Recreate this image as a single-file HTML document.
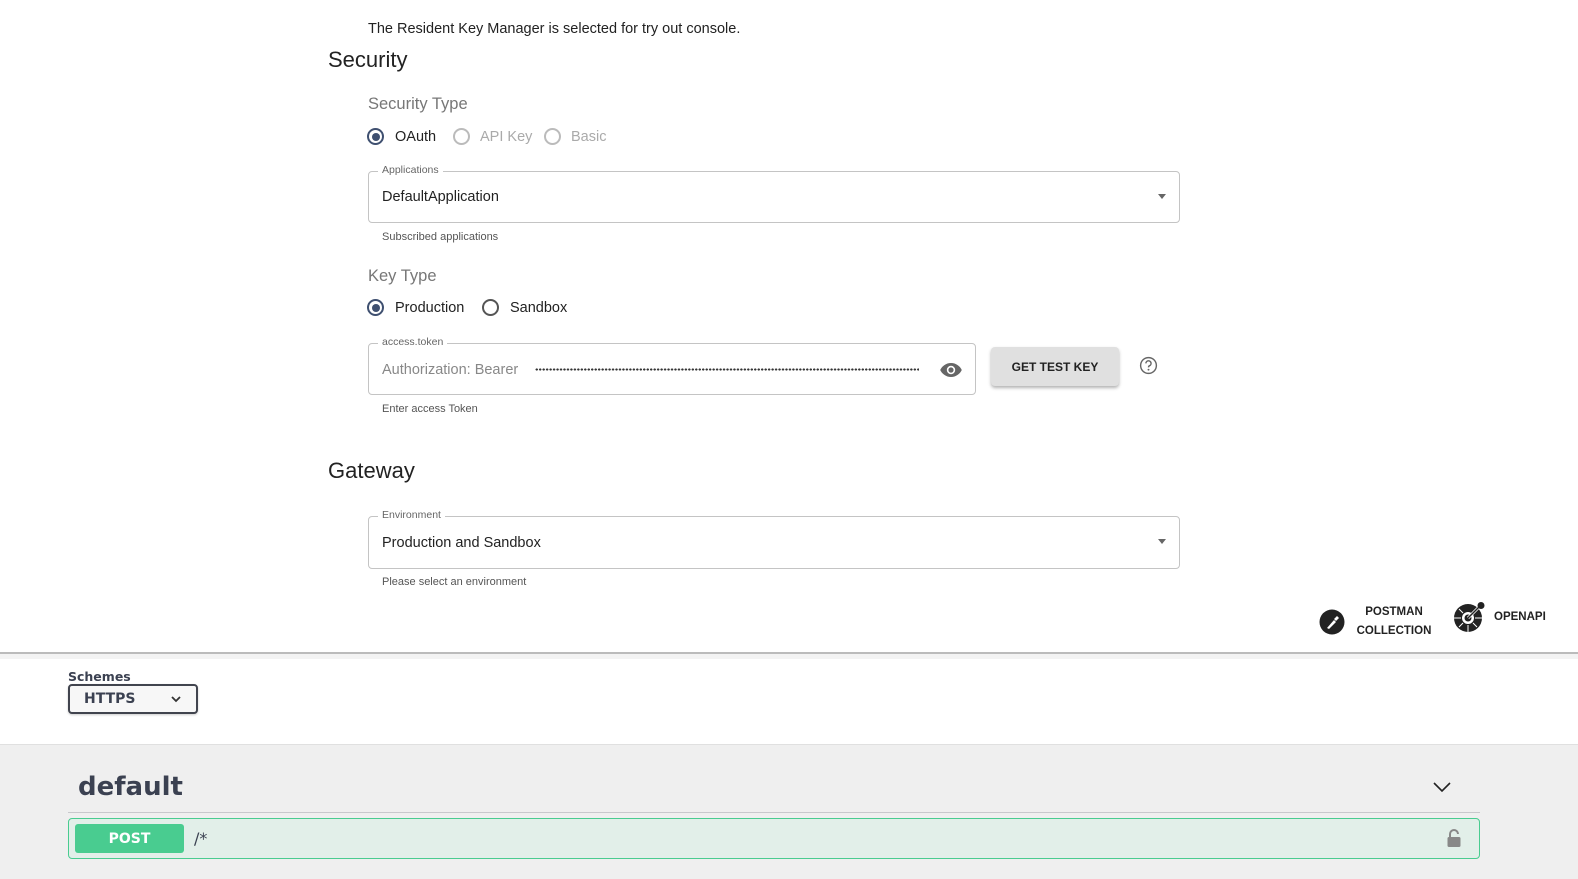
<!DOCTYPE html>
<html><head><meta charset="utf-8"><style>
*{box-sizing:border-box;margin:0;padding:0}
body{width:1578px;height:879px;overflow:hidden;background:#fff;font-family:"Liberation Sans",Arial,sans-serif;color:#222;position:relative}
.a{position:absolute;white-space:nowrap}
.radio{position:absolute;width:17px;height:17px;border-radius:50%;border:2px solid #bbb}
.radio.on{border-color:#3f5070}
.radio.on::after{content:"";position:absolute;left:2.5px;top:2.5px;width:8px;height:8px;border-radius:50%;background:#3f5070}
.field{position:absolute;border:1px solid #c4c4c4;border-radius:4px}
.leg{position:absolute;top:-8px;left:9px;background:#fff;padding:0 4px;font-size:10.5px;color:#666}
.help{font-size:11px;color:#555}
.caret{position:absolute;width:0;height:0;border-left:4.5px solid transparent;border-right:4.5px solid transparent;border-top:5px solid #666}
</style></head><body>
<div class="a" style="left:368px;top:21px;font-size:14.5px;color:#222">The Resident Key Manager is selected for try out console.</div>
<div class="a" style="left:328px;top:47px;font-size:22px;color:#222">Security</div>
<div class="a" style="left:368px;top:95px;font-size:16.5px;color:#777">Security Type</div>
<div class="radio on" style="left:367px;top:128px"></div>
<div class="a" style="left:395px;top:129px;font-size:14.5px">OAuth</div>
<div class="radio" style="left:453px;top:128px"></div>
<div class="a" style="left:480px;top:129px;font-size:14.5px;color:#aaa">API Key</div>
<div class="radio" style="left:544px;top:128px"></div>
<div class="a" style="left:571px;top:129px;font-size:14.5px;color:#aaa">Basic</div>

<div class="field" style="left:368px;top:171px;width:812px;height:52px"><span class="leg">Applications</span>
<div class="a" style="left:13px;top:17px;font-size:14.5px">DefaultApplication</div>
<div class="caret" style="left:789px;top:22px"></div></div>
<div class="a help" style="left:382px;top:231px">Subscribed applications</div>

<div class="a" style="left:368px;top:267px;font-size:16.5px;color:#777">Key Type</div>
<div class="radio on" style="left:367px;top:299px"></div>
<div class="a" style="left:395px;top:300px;font-size:14.5px">Production</div>
<div class="radio" style="left:482px;top:299px;border-color:#555"></div>
<div class="a" style="left:510px;top:300px;font-size:14.5px">Sandbox</div>

<div class="field" style="left:368px;top:343px;width:608px;height:52px"><span class="leg">access.token</span>
<div class="a" style="left:13px;top:18px;font-size:14.5px;color:#888">Authorization: Bearer</div>
<div class="a" style="left:166px;top:24px;width:384px;height:3px;background:radial-gradient(circle,#333 1px,transparent 1.3px) 0 0/3.47px 3px repeat-x"></div>
<svg class="a" style="left:570px;top:17px" width="24" height="18" viewBox="0 0 24 18"><path d="M12 2C7 2 3 5.2 1.2 9 3 12.8 7 16 12 16s9-3.2 10.8-7C21 5.2 17 2 12 2z" fill="#666"/><circle cx="12" cy="9" r="4.2" fill="#fff"/><circle cx="12" cy="9" r="2.6" fill="#666"/></svg>
</div>
<div class="a help" style="left:382px;top:403px">Enter access Token</div>
<div class="a" style="left:991px;top:347px;width:128px;height:39px;background:#e0e0e0;border-radius:4px;box-shadow:0 2px 3px rgba(0,0,0,.3);font-size:12px;font-weight:bold;text-align:center;line-height:40px;color:#222">GET TEST KEY</div>
<svg class="a" style="left:1139px;top:356px" width="19" height="19" viewBox="0 0 20 20"><circle cx="10" cy="10" r="8.3" fill="none" stroke="#666" stroke-width="1.5"/><path d="M7.3 7.8a2.7 2.7 0 1 1 3.8 2.4c-.8.4-1.1.9-1.1 1.8" fill="none" stroke="#666" stroke-width="1.5"/><circle cx="10" cy="14.4" r="1" fill="#666"/></svg>

<div class="a" style="left:328px;top:458px;font-size:22px;color:#222">Gateway</div>
<div class="field" style="left:368px;top:516px;width:812px;height:53px"><span class="leg">Environment</span>
<div class="a" style="left:13px;top:18px;font-size:14.5px">Production and Sandbox</div>
<div class="caret" style="left:789px;top:22px"></div></div>
<div class="a help" style="left:382px;top:576px">Please select an environment</div>

<svg class="a" style="left:1319px;top:609px" width="26" height="26" viewBox="0 0 26 26"><circle cx="13" cy="13" r="12.5" fill="#222"/><path d="M8 19l7-8 2 2-7 7z M15 10l3-3 2 2-3 3z" fill="#fff"/></svg>
<div class="a" style="left:1355px;top:603px;font-size:11.5px;font-weight:bold;text-align:center;line-height:19px;width:78px">POSTMAN<br>COLLECTION</div>
<svg class="a" style="left:1453px;top:601px" width="34" height="32" viewBox="0 0 34 32"><circle cx="15" cy="17" r="14" fill="#222"/><circle cx="15" cy="17" r="6" fill="#fff"/><circle cx="15" cy="17" r="3.5" fill="#222"/><path d="M15 17L27 5" stroke="#fff" stroke-width="3"/><path d="M15 17L27 5" stroke="#222" stroke-width="1.5"/><circle cx="28" cy="4.5" r="3.5" fill="#222"/><path d="M1 17h7M22 17h7M15 24v7M6 26l4-4M24 26l-4-4M6 8l4 4" stroke="#fff" stroke-width="1"/></svg>
<div class="a" style="left:1494px;top:611px;font-size:11.5px;font-weight:bold">OPENAPI</div>

<div class="a" style="left:0;top:652px;width:1578px;height:2px;background:#bbb"></div>
<div class="a" style="left:0;top:654px;width:1578px;height:5px;background:#f3f3f3"></div>
<div class="a" style="left:68px;top:669px;font-size:12.5px;font-weight:bold;color:#3b4151;font-family:'DejaVu Sans',sans-serif">Schemes</div>
<div class="a" style="left:68px;top:684px;width:130px;height:30px;border:2px solid #41444e;border-radius:4px;background:#f7f7f7;box-shadow:0 1px 2px rgba(0,0,0,.2)">
<span class="a" style="left:14px;top:5px;font-size:14px;font-weight:bold;color:#3b4151;font-family:'DejaVu Sans',sans-serif">HTTPS</span>
<svg class="a" style="left:100px;top:9px" width="12" height="9" viewBox="0 0 12 9"><path d="M2 2l4 4 4-4" stroke="#333" stroke-width="1.8" fill="none"/></svg></div>

<div class="a" style="left:0;top:744px;width:1578px;height:135px;background:#efefef;border-top:1px solid #e0e0e0"></div>
<div class="a" style="left:78px;top:772px;font-size:26px;font-weight:bold;color:#3b4151;font-family:'DejaVu Sans',sans-serif">default</div>
<svg class="a" style="left:1432px;top:781px" width="20" height="12" viewBox="0 0 20 12"><path d="M2 2l8 8 8-8" stroke="#222" stroke-width="1.6" fill="none"/></svg>
<div class="a" style="left:68px;top:812px;width:1412px;height:1px;background:#c8c8cc"></div>
<div class="a" style="left:68px;top:818px;width:1412px;height:41px;background:#e2efe9;border:1px solid #49cc90;border-radius:4px">
<div class="a" style="left:6px;top:5px;width:109px;height:29px;background:#49cc90;border-radius:3px;color:#fff;font-weight:bold;font-size:14px;text-align:center;line-height:30px;font-family:'DejaVu Sans',sans-serif">POST</div>
<div class="a" style="left:125px;top:10px;font-size:16px;color:#3b4151;font-family:'DejaVu Sans',sans-serif">/*</div>
<svg class="a" style="left:1377px;top:9px" width="16" height="20" viewBox="0 0 16 20"><path d="M4 9V6a4 4 0 0 1 8 0" stroke="#888" stroke-width="2" fill="none"/><rect x="1.5" y="9" width="13" height="10" rx="1.5" fill="#888"/></svg>
</div>
</body></html>
